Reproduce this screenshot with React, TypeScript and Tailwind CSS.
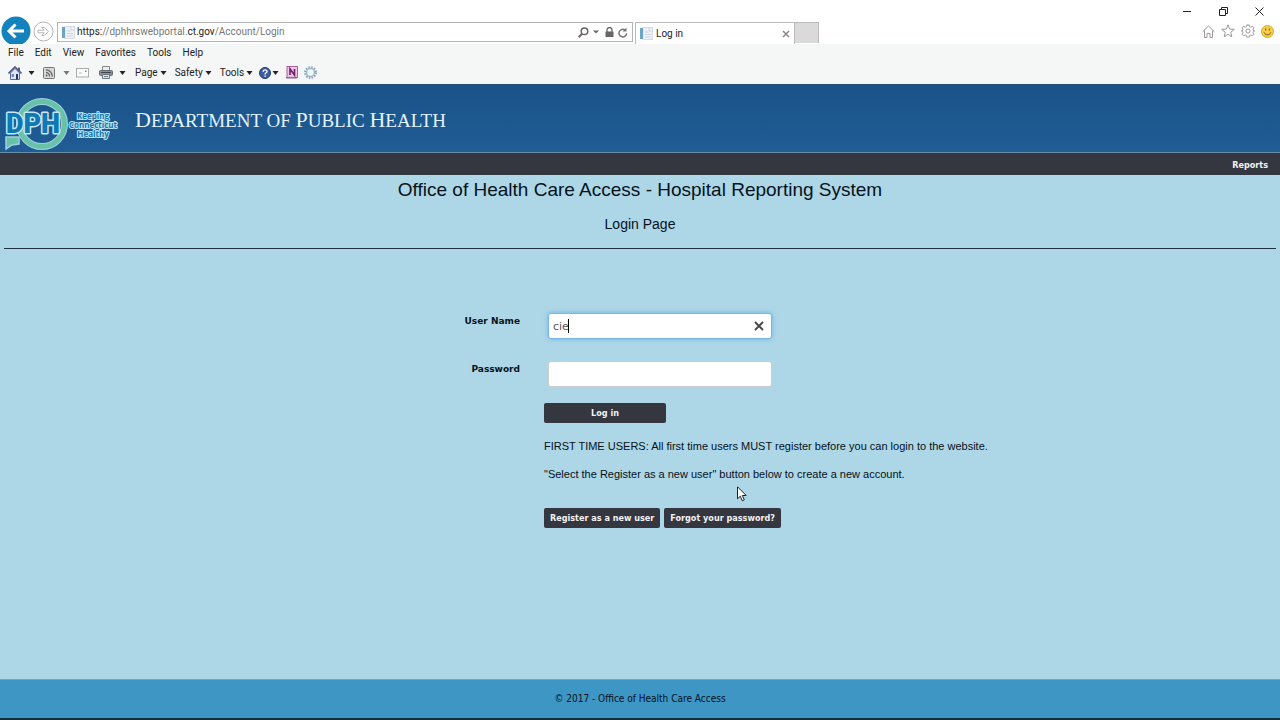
import { useState, type ReactNode } from "react";

const menus = ["File", "Edit", "View", "Favorites", "Tools", "Help"];

// Small black triangle used by the command bar drop-downs
function Caret({ muted = false }: { muted?: boolean }) {
  return (
    <svg width="7" height="4" viewBox="0 0 7 4" className={muted ? "text-[#777]" : "text-[#222]"}>
      <path d="M0.5 0h6L3.5 4z" fill="currentColor" />
    </svg>
  );
}

function PageIcon() {
  return (
    <svg width="13" height="13" viewBox="0 0 13 13" className="shrink-0">
      <rect x="3" y="0.5" width="9.5" height="12" fill="#eef2f7" stroke="#d5dce4" />
      <path d="M5 5h4M5 7.5h6M5 10h6" stroke="#ccd5e2" />
      <path d="M9 1v3h3" fill="none" stroke="#ccd5e2" />
      <rect x="0" y="1" width="3" height="11" fill="#6da6c4" />
    </svg>
  );
}

function HouseIcon() {
  return (
    <svg width="14" height="14" viewBox="0 0 14 14">
      <path d="M10 1.5h2v4h-2z" fill="#5b6494" />
      <path d="M2.5 7v6.5h9V7L7 2.5z" fill="#dfe5f3" stroke="#5d6b9b" />
      <path d="M0.5 7.5L7 1l6.5 6.5" fill="none" stroke="#4c5a8a" strokeWidth="1.6" />
      <path d="M3.7 8h2.2v3H3.7z" fill="#5f86c4" />
      <path d="M8 8h2v5.5H8z" fill="#27346b" />
    </svg>
  );
}

function FeedIcon() {
  return (
    <svg width="12" height="12" viewBox="0 0 12 12" fill="none">
      <rect x="0.5" y="0.5" width="11" height="11" rx="1" fill="#d8d8d8" stroke="#777" />
      <path d="M3 5.5A3.7 3.7 0 0 1 6.6 9.5M3 2.8A6.5 6.5 0 0 1 9.3 9.5" stroke="#666" strokeWidth="1.3" />
      <circle cx="3.6" cy="8.6" r="1" fill="#666" />
    </svg>
  );
}

function MailIcon() {
  return (
    <svg width="13" height="10" viewBox="0 0 13 10" fill="none">
      <rect x="0.5" y="0.5" width="12" height="8.5" fill="#fafafa" stroke="#aaa" />
      <path d="M9 2.5h1.5v1.5H9z" fill="#888" />
      <path d="M3 5h3" stroke="#bbb" />
    </svg>
  );
}

function PrinterIcon() {
  return (
    <svg width="14" height="13" viewBox="0 0 14 13">
      <path d="M3.5 0.5h7v4h-7z" fill="#ededed" stroke="#888" />
      <rect x="0.5" y="4.5" width="13" height="5" rx="1" fill="#8a9097" stroke="#666c73" />
      <path d="M2 6.5h10" stroke="#42474d" />
      <path d="M3.5 8.5h7v4h-7z" fill="#dfe6ee" stroke="#70767d" />
      <path d="M5 10.5h4" stroke="#6582a8" />
    </svg>
  );
}

function HelpIcon() {
  return (
    <svg width="12" height="12" viewBox="0 0 12 12" fill="none">
      <circle cx="6" cy="6" r="5.5" fill="#3e5c9f" stroke="#243c76" />
      <path d="M4.2 4.7C4.2 2.3 8 2.3 8 4.4 8 5.8 6.1 5.8 6.1 7.4M6.1 8.5v1.3" stroke="#fff" strokeWidth="1.4" />
    </svg>
  );
}

function NoteIcon() {
  return (
    <svg width="13" height="13" viewBox="0 0 13 13" fill="none">
      <rect x="2" y="0.5" width="10.5" height="11" fill="#ebc5e4" stroke="#a762a1" />
      <rect x="1" y="11" width="11" height="1.5" fill="#8f668f" />
      <path d="M5 9V3l4.5 6V3" stroke="#722068" strokeWidth="1.6" />
    </svg>
  );
}

function GearIcon() {
  return (
    <svg width="14" height="14" viewBox="0 0 24 24" fill="none" stroke="#999" strokeWidth="1.7" strokeLinejoin="round">
      <path d="M10 1.5h4l.7 3 2 .9 2.7-1.6 2.8 2.8-1.6 2.7.9 2 2 .7-2 .7-.9 2 1.6 2.7-2.8 2.8-2.7-1.6-2 .9-.7 3h-4l-.7-3-2-.9-2.7 1.6-2.8-2.8 1.6-2.7-.9-2-2-.7 2-.7.9-2-1.6-2.7 2.8-2.8 2.7 1.6 2-.9z" />
      <circle cx="12" cy="12" r="3.5" />
    </svg>
  );
}

// Pale blue toothed ring at the end of the command bar
function CogRing() {
  return (
    <svg width="13" height="13" viewBox="0 0 13 13" fill="none">
      <circle cx="6.5" cy="6.5" r="5.4" stroke="#829fb9" strokeWidth="2" strokeDasharray="1.5 1.33" />
      <circle cx="6.5" cy="6.5" r="4" fill="#f4f8fb" stroke="#99b8d0" strokeWidth="1.5" />
    </svg>
  );
}

function IconButton({ label, children, className = "" }: { label: string; children: ReactNode; className?: string }) {
  return (
    <button type="button" aria-label={label} className={`flex shrink-0 items-center justify-center ${className}`}>
      {children}
    </button>
  );
}

function AddressBar() {
  return (
    <div className="mt-[22px] flex h-5 w-[45%] items-center border border-[#b4b4b4] bg-white px-1">
      <PageIcon />
      <div className="ml-[2px] flex-1 whitespace-nowrap text-[10px] leading-4 text-[#777]">
        <span className="text-[#222]">https:</span>//dphhrswebportal.<span className="text-[#222]">ct.gov</span>/Account/Login
      </div>
      <IconButton label="Search">
        <svg width="11" height="11" viewBox="0 0 11 11" fill="none" stroke="#666" strokeWidth="1.5">
          <circle cx="6.5" cy="4.2" r="3.3" />
          <path d="M4 6.8L0.7 10.2" strokeWidth="2" />
        </svg>
      </IconButton>
      <IconButton label="Show history" className="ml-1">
        <svg width="6" height="4" viewBox="0 0 6 4">
          <path d="M0 0.5h6L3 3.5z" fill="#666" />
        </svg>
      </IconButton>
      <IconButton label="Security report" className="ml-[6px]">
        <svg width="9" height="10" viewBox="0 0 9 10">
          <path d="M2 5V3a2.5 2.5 0 0 1 5 0v2" fill="none" stroke="#666" strokeWidth="1.3" />
          <rect x="0.5" y="4.5" width="8" height="5.5" rx="0.5" fill="#666" />
        </svg>
      </IconButton>
      <IconButton label="Refresh" className="ml-1">
        <svg width="10" height="11" viewBox="0 0 10 11" fill="none" stroke="#777" strokeWidth="1.5">
          <path d="M8.6 6.2A3.8 3.8 0 1 1 7 3" />
          <path d="M8.5 0.5v4h-4z" fill="#777" stroke="none" />
        </svg>
      </IconButton>
    </div>
  );
}

function TitleBar() {
  return (
    <div className="flex h-11 items-start overflow-hidden bg-white">
      <IconButton label="Back" className="mt-4 ml-[1px]">
        <svg width="30" height="30" viewBox="0 0 30 30" fill="none">
          <circle cx="15" cy="15" r="14.5" fill="#1382bd" />
          <path d="M23 15H8.5M14.5 8.5L8 15l6.5 6.5" stroke="#fff" strokeWidth="3" />
        </svg>
      </IconButton>
      <IconButton label="Forward" className="mt-[21px] mr-[3px] ml-[2px]">
        <svg width="21" height="21" viewBox="0 0 21 21" fill="none" stroke="#b5b5b5">
          <circle cx="10.5" cy="10.5" r="9.5" />
          <path d="M5 9.2h6.2L8.8 6.5h2.6l4 4-4 4H8.8l2.400-2.700H5z" />
        </svg>
      </IconButton>
      <AddressBar />
      <div className="mt-[22px] ml-[2px] flex h-[22px] w-[160px] items-center border-x border-t border-[#bbb] bg-white px-1">
        <PageIcon />
        <span className="ml-[3px] flex-1 text-[10px] leading-4 text-[#222]">Log in</span>
        <IconButton label="Close tab">
          <svg width="8" height="8" viewBox="0 0 8 8" stroke="#888" strokeWidth="1.5">
            <path d="M1 1l6 6M7 1L1 7" />
          </svg>
        </IconButton>
      </div>
      <button type="button" aria-label="New tab" className="mt-[22px] h-[21px] w-6 border-t border-r border-[#bbb] bg-[#dadada]" />

      <div className="ml-auto flex shrink-0 flex-col items-end">
        <div className="flex h-[22px] items-center gap-[27px] pr-4">
          <IconButton label="Minimize">
            <svg width="10" height="10" viewBox="0 0 10 10" stroke="#222">
              <path d="M1 5.5h8" />
            </svg>
          </IconButton>
          <IconButton label="Restore">
            <svg width="9" height="9" viewBox="0 0 9 9" fill="none" stroke="#222">
              <path d="M0.5 2.5h6v6h-6zM2.5 2.5v-2h6v6h-2" />
            </svg>
          </IconButton>
          <IconButton label="Close">
            <svg width="9" height="9" viewBox="0 0 9 9" stroke="#222">
              <path d="M0.5 0.5l8 8M8.5 0.5l-8 8" />
            </svg>
          </IconButton>
        </div>
        <div className="flex items-center gap-[6px] pt-[2px] pr-[6px]">
          <IconButton label="Home">
            <svg width="13" height="13" viewBox="0 0 13 13" fill="none" stroke="#999">
              <path d="M0.7 6.7L6.5 1l5.8 5.7M2.5 5.5v7H5v-4h3v4h2.5v-7" />
            </svg>
          </IconButton>
          <IconButton label="Favorites">
            <svg width="14" height="14" viewBox="0 0 14 14" fill="none" stroke="#999">
              <path d="M7 0.8l1.7 4.3 4.6.3-3.6 2.9 1.2 4.5L7 10.3l-3.9 2.5 1.2-4.5L0.7 5.4l4.6-.3z" />
            </svg>
          </IconButton>
          <IconButton label="Settings">
            <GearIcon />
          </IconButton>
          <IconButton label="Send a smile">
            <svg width="13" height="13" viewBox="0 0 13 13" fill="none">
              <circle cx="6.5" cy="6.5" r="6" fill="#f5ce43" stroke="#d3a935" />
              <path d="M3.2 7.5c1 3 5.6 3 6.6 0M4.7 3.5v2M8.3 3.5v2" stroke="#68501b" />
            </svg>
          </IconButton>
        </div>
      </div>
    </div>
  );
}

function CommandBar() {
  return (
    <div className="bg-[#f5f6f6] text-[10px] leading-4 text-[#222]">
      <nav className="flex gap-[11px] px-2 pt-[1px]">
        {menus.map((menu) => (
          <button key={menu} type="button">
            {menu}
          </button>
        ))}
      </nav>
      <div className="flex h-[23px] items-center pl-2">
        <IconButton label="Home page">
          <HouseIcon />
        </IconButton>
        <IconButton label="Home page options" className="ml-[6px]">
          <Caret />
        </IconButton>
        <IconButton label="Feeds" className="ml-2">
          <FeedIcon />
        </IconButton>
        <IconButton label="Feed options" className="ml-2">
          <Caret muted />
        </IconButton>
        <IconButton label="Read mail" className="ml-[6px]">
          <MailIcon />
        </IconButton>
        <IconButton label="Print" className="ml-[10px]">
          <PrinterIcon />
        </IconButton>
        <IconButton label="Print options" className="ml-[6px]">
          <Caret />
        </IconButton>
        <div className="ml-[9px] flex items-center gap-2">
          {["Page", "Safety", "Tools"].map((item) => (
            <button key={item} type="button" className="flex items-center gap-[2px]">
              {item}
              <Caret />
            </button>
          ))}
        </div>
        <IconButton label="Help" className="ml-[6px] gap-[1px]">
          <HelpIcon />
          <Caret />
        </IconButton>
        <IconButton label="Send to notes" className="ml-[6px]">
          <NoteIcon />
        </IconButton>
        <IconButton label="Add-ons" className="ml-[6px]">
          <CogRing />
        </IconButton>
      </div>
    </div>
  );
}

function DphLogo() {
  return (
    <svg width="118" height="56" viewBox="0 0 118 56" role="img" aria-label="DPH Keeping Connecticut Healthy">
      {/* Light halo behind the ring */}
      <circle cx="38" cy="27" r="22.5" fill="none" stroke="#9fcfe3" strokeWidth="7" />
      <circle cx="38" cy="27" r="22.5" fill="none" stroke="#68c2a5" strokeWidth="5" />
      <path d="M2 40h13v7l-7 1-6 4z" fill="#68c2a5" stroke="#9fcfe3" strokeWidth="1.5" />
      <g strokeLinejoin="round" paintOrder="stroke">
        <text
          x="2"
          y="36"
          fontFamily="Roboto, sans-serif"
          fontSize="27"
          fontWeight="900"
          fill="#0d79b5"
          stroke="#c5e6f3"
          strokeWidth="3"
        >
          DPH
        </text>
        <g
          fontFamily="'Open Sans', sans-serif"
          fontSize="8"
          fontWeight="700"
          fill="#1678ae"
          stroke="#bce5f5"
          strokeWidth="2"
          textAnchor="middle"
        >
          <text x="89" y="22">Keeping</text>
          <text x="89" y="31">Connecticut</text>
          <text x="89" y="40">Healthy</text>
        </g>
      </g>
    </svg>
  );
}

// Serif capitals with a larger initial on the main words
function DepartmentName() {
  return (
    <span className="mb-2 ml-[13px] font-['Liberation_Serif',serif] text-[19px] leading-7 whitespace-nowrap text-[#e3f3fc] uppercase">
      <span className="text-[22px]">D</span>epartment of <span className="text-[22px]">P</span>ublic{" "}
      <span className="text-[22px]">H</span>ealth
    </span>
  );
}

function LoginForm() {
  const [userName, setUserName] = useState("cie");
  const [password, setPassword] = useState("");

  const buttonStyles =
    "h-5 rounded-[2px] bg-[#353740] font-['DejaVu_Sans_Condensed','DejaVu_Sans',sans-serif] text-[9px] leading-5 font-bold text-[#f2f2f2]";

  return (
    <form
      className="grid grid-cols-[13fr_19fr] pt-16 font-['DejaVu_Sans',Verdana,sans-serif]"
      onSubmit={(e) => e.preventDefault()}
    >
      <label htmlFor="userName" className="h-12 text-right text-[9px] leading-4 font-bold">
        User Name
      </label>
      <div className="pl-7">
        <div className="relative w-[224px]">
          <input
            id="userName"
            type="text"
            value={userName}
            onChange={(e) => setUserName(e.target.value)}
            className="block h-[26px] w-full rounded-[3px] border border-[#79b7e8] bg-white px-1 text-[11px] text-[#555] shadow-[0_0_4px_#66afe9] outline-none"
          />
          <span className="absolute top-[6px] left-5 h-[14px] w-px bg-black" />
          <button
            type="button"
            aria-label="Clear"
            onClick={() => setUserName("")}
            className="absolute top-2 right-2"
          >
            <svg width="10" height="10" viewBox="0 0 10 10" stroke="#444" strokeWidth="1.8">
              <path d="M1 1l8 8M9 1L1 9" />
            </svg>
          </button>
        </div>
      </div>

      <label htmlFor="password" className="text-right text-[9px] leading-4 font-bold">
        Password
      </label>
      <div className="pl-7">
        <input
          id="password"
          type="password"
          value={password}
          onChange={(e) => setPassword(e.target.value)}
          className="block h-[26px] w-[224px] rounded-[3px] border border-[#ccc] bg-white px-1 text-[11px] text-[#555] outline-none"
        />
      </div>

      <div className="col-start-2 pt-4 pl-6">
        <button type="submit" className={`${buttonStyles} block w-[122px]`}>
          Log in
        </button>
        <div className="relative pt-[13px] font-['Liberation_Sans',Arial,sans-serif] text-[11px] leading-5">
          <p>FIRST TIME USERS: All first time users MUST register before you can login to the website.</p>
          <p className="mt-2">"Select the Register as a new user" button below to create a new account.</p>
          {/* Mouse pointer */}
          <svg width="10" height="16" viewBox="0 0 10 16" className="absolute top-[63px] left-[193px]">
            <path d="M0.5 0.8v12l2.8-2.6 2 4.6 2-.9-2-4.4h3.9z" fill="#fff" stroke="#222" />
          </svg>
        </div>
        <div className="mt-6 flex gap-1">
          <button type="button" className={`${buttonStyles} px-[6px]`}>
            Register as a new user
          </button>
          <button type="button" className={`${buttonStyles} px-[6px]`}>
            Forgot your password?
          </button>
        </div>
      </div>
    </form>
  );
}

function App() {
  return (
    <div className="flex min-h-screen flex-col bg-[#add6e6] font-['Roboto','Segoe_UI',sans-serif] text-[#06121c]">
      <TitleBar />
      <CommandBar />

      <header>
        <div className="flex h-[69px] items-center border-t border-b border-t-[#234f74] border-b-[#6b8da6] bg-linear-to-b from-[#195288] to-[#205d94] pt-3 pl-1">
          <DphLogo />
          <DepartmentName />
        </div>
        <nav className="flex h-[22px] items-center justify-end bg-[#353740] pt-[2px] pr-3 font-['DejaVu_Sans_Condensed','DejaVu_Sans',sans-serif] text-[9px] leading-4 font-bold text-[#f2f2f2]">
          <a href="#reports">Reports</a>
        </nav>
      </header>

      <main className="flex-1">
        <div className="mx-1 border-b border-[#1d2d3c] pb-[14px] text-center font-['Liberation_Sans',Arial,sans-serif]">
          <h1 className="pt-[3px] text-[19px] leading-6">Office of Health Care Access - Hospital Reporting System</h1>
          <h2 className="pt-3 text-[14px] leading-5">Login Page</h2>
        </div>
        <LoginForm />
      </main>

      <footer className="border-t border-b-2 border-t-[#65a8ca] border-b-[#12303f] bg-[#3d96c3] py-[11px] text-center font-['DejaVu_Sans_Condensed','DejaVu_Sans',sans-serif] text-[10px] leading-4">
        © 2017 - Office of Health Care Access
      </footer>
    </div>
  );
}

export default App;
